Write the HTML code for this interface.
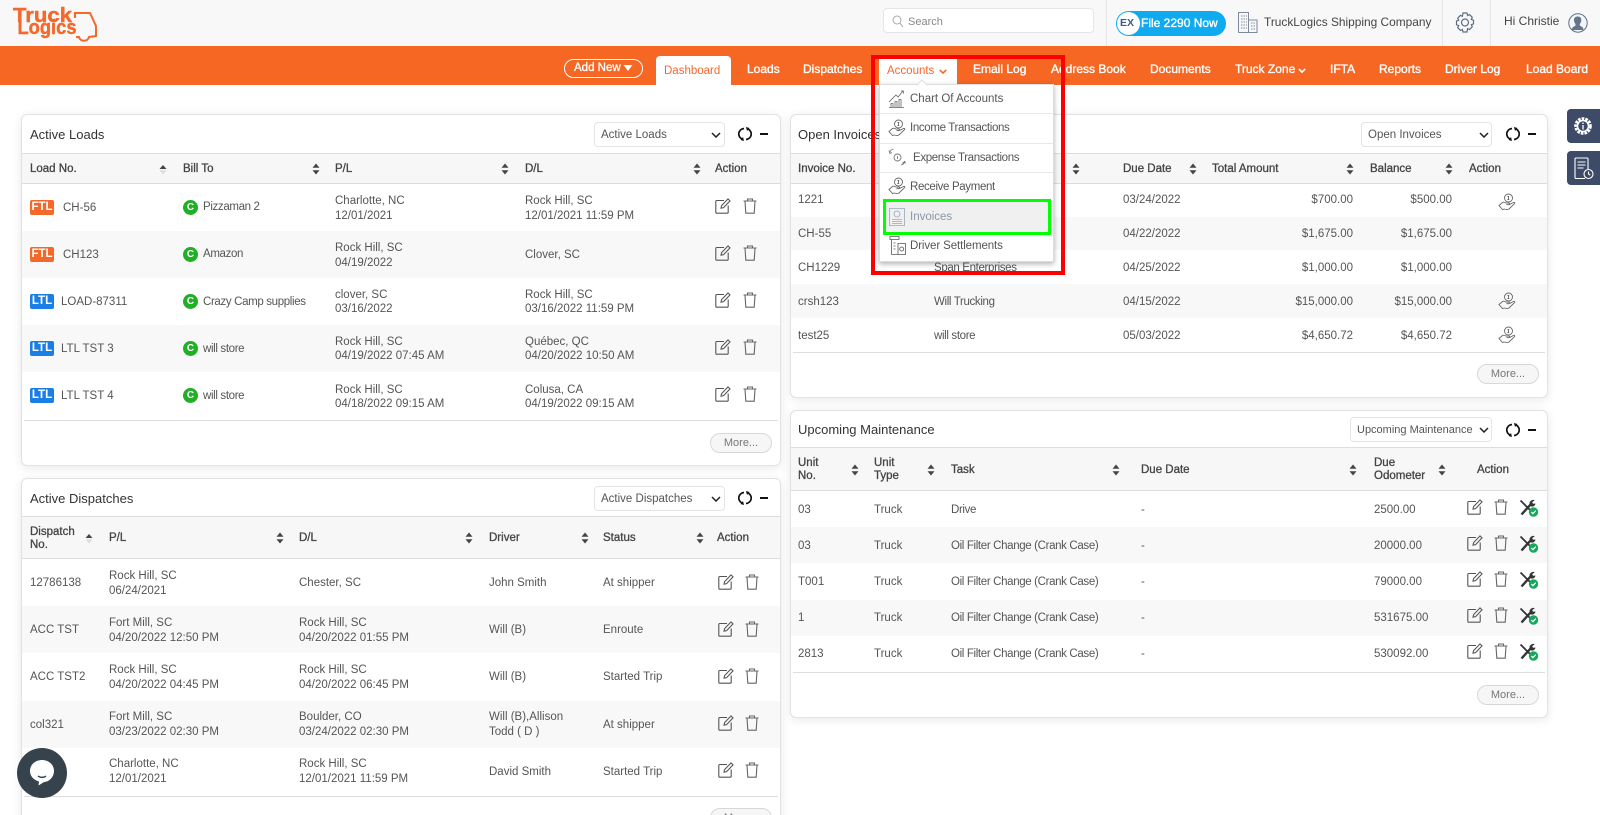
<!DOCTYPE html>
<html><head><meta charset="utf-8"><title>TruckLogics</title>
<style>
html,body{margin:0;padding:0;width:1600px;height:815px;overflow:hidden;background:#fff;font-family:"Liberation Sans",sans-serif}
#p{position:relative;width:1600px;height:815px;overflow:hidden}
#p div,#p svg{position:absolute}
.t{white-space:nowrap;height:14px;line-height:14px;font-size:11.5px;color:#555;margin-top:1px}
.a{letter-spacing:-.35px}
.h{white-space:nowrap;height:14px;line-height:14px;font-size:11.5px;color:#444;-webkit-text-stroke:.3px #444}
.n{white-space:nowrap;height:14px;line-height:14px;font-size:12px;color:#fff;top:62px;-webkit-text-stroke:.35px #fff}
.r{text-align:right}
.card{background:#fff;border:1px solid #e2e2e2;border-radius:6px;box-shadow:0 2px 10px rgba(0,0,0,.09);box-sizing:border-box}
.hd{background:#f7f7f7;border-top:1px solid #ddd;border-bottom:1px solid #ddd;box-sizing:border-box}
.alt{background:#f8f8f8}
.ln{background:#ddd;height:1px}
.ttl{white-space:nowrap;height:16px;line-height:16px;font-size:13px;color:#333}
.sel{background:#fff;border:1px solid #e4e4e4;border-radius:4px;box-sizing:border-box;height:25px;font-size:11.5px;line-height:25px;color:#555;padding-left:6px;white-space:nowrap}
.more{background:#f6f6f6;border:1px solid #d8d8d8;border-radius:10px;box-sizing:border-box;height:20px;width:62px;font-size:11px;line-height:18px;color:#777;text-align:center}
.b{width:24px;height:15px;border-radius:2px;color:#fff;font-size:11.5px;font-weight:bold;line-height:15px;text-align:center}
.ftl{background:#f4682a}.ltl{background:#1b7ee6}
.c{width:15px;height:15px;border-radius:50%;background:#1fb025;color:#fff;font-size:10px;font-weight:bold;line-height:15px;text-align:center}
.m{white-space:nowrap;height:14px;line-height:14px;font-size:11.5px;color:#555;margin-top:1px}
.sep{background:#e8e8e8;height:1px;left:880px;width:173px}
</style></head><body><div id="p">
<svg width="0" height="0" style="left:0;top:0">
<defs>
<symbol id="e" viewBox="0 0 16 16"><g fill="none" stroke="#555" stroke-width="1.1"><path d="M9 2.5H1.8a1 1 0 0 0-1 1v10.7a1 1 0 0 0 1 1h10.4a1 1 0 0 0 1-1V7.5"/><path d="M6 10.2l.6-2.6L13 .9l2 2-6.400 6.700z"/></g></symbol>
<symbol id="d" viewBox="0 0 16 16"><g fill="none" stroke="#666" stroke-width="1.1"><path d="M1.500 3h13M5.500 3V1h5v2M3 3l.8 12.200h8.400L13 3"/></g></symbol>
<symbol id="s" viewBox="0 0 8 12"><path d="M4 .5L7.500 4.800H.5zM4 11.500L.5 7.200h7z" fill="#444"/></symbol>
<symbol id="u" viewBox="0 0 8 12"><path d="M4 2L7.500 6H.5z" fill="#444"/><path d="M4 11.500L.5 7.200h7z" fill="#ddd"/></symbol>
<symbol id="rf" viewBox="0 0 14 14"><g fill="none" stroke="#111" stroke-width="1.700"><path d="M6 1.500A5.500 5.500 0 0 0 4 12"/><path d="M8 12.500A5.500 5.500 0 0 0 10 2"/></g><path d="M5 10l1 4-3.500-1zM9 4L8 0l3.500 1z" fill="#111"/></symbol>
<symbol id="v" viewBox="0 0 10 6"><path d="M1 1l4 4 4-4" fill="none" stroke="#222" stroke-width="1.500"/></symbol>
<symbol id="hc" viewBox="0 0 18 18"><g fill="none" stroke="#666" stroke-width=".9"><circle cx="10.500" cy="5" r="4"/><path d="M10.500 3v4M9.500 6.500h1.700M9.500 3.600h1.700"/><path d="M1 12.500l3.500-3c1.500-.8 2.500 0 3.500.6h3c1 0 1 1.500 0 1.600H8.500l3.200-.3 4-2c1-.3 1.500.6.800 1.300L11 16c-1.500.8-3 .5-4.500 0L4.500 16.500z"/></g></symbol>
<symbol id="tl" viewBox="0 0 20 18"><g fill="none" stroke="#333"><path d="M1.500 1.500L12 12" stroke-width="1.800"/><path d="M2.500 15.500L12 5" stroke-width="2.400"/></g><path d="M10.500 4c.4-2.200 3-3.700 5.300-2.900l-2.600 2 .8 1.700 2.400-.3c0 2.200-2.700 3.800-4.800 2.800z" fill="#333"/><circle cx="14.500" cy="13" r="4.700" fill="#14a85a"/><path d="M12.300 13l1.600 1.700 2.800-3" fill="none" stroke="#fff" stroke-width="1.200"/></symbol>
</defs></svg>

<!-- top bar -->
<div style="left:0;top:0;width:1600px;height:46px;background:#f8f8f8"></div>
<svg style="left:10px;top:4px" width="90" height="40" viewBox="0 0 90 40">
<text x="3" y="18" font-family="Liberation Sans" font-weight="bold" font-size="20" fill="#f4682a" stroke="#f4682a" stroke-width=".4" textLength="59" lengthAdjust="spacingAndGlyphs">Truck</text>
<text x="7.500" y="30" font-family="Liberation Sans" font-weight="bold" font-size="20" fill="#f4682a" stroke="#f4682a" stroke-width=".4" textLength="59" lengthAdjust="spacingAndGlyphs">Logics</text>
<path d="M65 14V9h15l6 13v10l-7 1c-1 5-9 5-10 0h-3" fill="none" stroke="#f4682a" stroke-width="2"/>
</svg>
<div style="left:883px;top:8px;width:211px;height:25px;background:#fff;border:1px solid #e6e6e6;border-radius:4px;box-sizing:border-box"></div>
<svg style="left:892px;top:15px" width="12" height="13" viewBox="0 0 12 13"><circle cx="5" cy="5" r="4" fill="none" stroke="#aaa"/><path d="M8 8l3 4" stroke="#aaa"/></svg>
<div class="t" style="left:908px;top:14px;color:#888;font-size:11px">Search</div>
<div style="left:1106px;top:0;width:1px;height:46px;background:#e6e6e6"></div>
<div style="left:1442px;top:0;width:1px;height:46px;background:#e6e6e6"></div>
<div style="left:1490px;top:0;width:1px;height:46px;background:#e6e6e6"></div>
<div style="left:1116px;top:11px;width:110px;height:25px;border-radius:13px;background:#10aaf0"></div>
<div style="left:1117px;top:12px;width:23px;height:23px;border-radius:50%;background:#fff"></div>
<div style="left:1120px;top:17px;font-size:10.500px;font-weight:bold;line-height:13px;color:#3a5a8c">EX</div>
<div style="left:1141px;top:16px;white-space:nowrap;font-size:12px;line-height:14px;color:#fff;-webkit-text-stroke:.35px #fff">File 2290 Now</div>
<svg style="left:1238px;top:12px" width="20" height="21" viewBox="0 0 20 21"><g fill="none" stroke="#7d8a9c"><path d="M.5 20.500V.5h10v20M10.500 8h8.500v12.500H.5"/><path d="M3 4h6M3 7h6M3 10h6M3 13h6M3 16h6M13 11h4M13 14h4M13 17h4" stroke-dasharray="1.500 1"/></g></svg>
<div class="t" style="left:1264px;top:14px;font-size:11.900px;color:#444">TruckLogics Shipping Company</div>
<svg style="left:1455px;top:12px" width="20" height="21" viewBox="0 0 20 21"><g fill="none" stroke="#5e6e86" stroke-width="1.200"><path d="M8 1h4l.6 2.500 2-.9 2.700 2.800-1 2 2.200.8v3.700l-2.200.8 1 2-2.700 2.800-2-.9L12 20H8l-.6-2.500-2 .9-2.700-2.800 1-2-2.200-.8V9l2.200-.8-1-2 2.700-2.800 2 .9z"/><circle cx="10" cy="10.500" r="3.500"/></g></svg>
<div class="t" style="left:1504px;top:13px;font-size:12px;color:#444">Hi Christie</div>
<svg style="left:1568px;top:13px" width="20" height="20" viewBox="0 0 20 20"><circle cx="10" cy="10" r="9.200" fill="#f4f6f8" stroke="#5e6e86"/><path d="M10 3.500c2.500 0 3.500 2 3.300 4-.1 1.500-1 3-1.500 3.500v1.500l3 2c.5.500.5 1.500.5 2.500H4c0-1 0-2 .5-2.500l3-2V11c-.5-.5-1.400-2-1.500-3.500-.2-2 .8-4 3.500-4z" fill="#64748c"/></svg>

<!-- nav -->
<div style="left:0;top:46px;width:1600px;height:39px;background:#f56723"></div>
<div style="left:564px;top:59px;width:79px;height:19px;border:1px solid #fff;border-radius:10px;box-sizing:border-box"></div>
<div class="n" style="left:574px;top:61px;font-size:11.500px">Add New</div>
<svg style="left:623px;top:65px" width="10" height="6" viewBox="0 0 10 6"><path d="M.5 0h9L5 6z" fill="#fff"/></svg>
<div style="left:656px;top:56px;width:75px;height:29px;background:#fff;border-radius:4px 4px 0 0"></div>
<div class="t" style="left:664px;top:63px;color:#f4682a">Dashboard</div>
<div class="n" style="left:747px">Loads</div>
<div class="n" style="left:803px">Dispatches</div>
<div style="left:879px;top:58px;width:78px;height:27px;background:#fff"></div>
<div class="t" style="left:887px;top:63px;color:#f4682a">Accounts</div>
<svg style="left:939px;top:69px" width="8" height="5" viewBox="0 0 10 6"><path d="M1 1l4 4 4-4" fill="none" stroke="#f4682a" stroke-width="2"/></svg>
<div class="n" style="left:973px">Email Log</div>
<div class="n" style="left:1051px">Address Book</div>
<div class="n" style="left:1150px">Documents</div>
<div class="n" style="left:1235px">Truck Zone</div>
<svg style="left:1298px;top:68px" width="8" height="5" viewBox="0 0 10 6"><path d="M1 1l4 4 4-4" fill="none" stroke="#fff" stroke-width="2"/></svg>
<div class="n" style="left:1330px">IFTA</div>
<div class="n" style="left:1379px">Reports</div>
<div class="n" style="left:1445px">Driver Log</div>
<div class="n" style="left:1526px">Load Board</div>

<!-- Active Loads -->
<div class="card" style="left:21px;top:114px;width:760px;height:352px"></div>
<div class="ttl" style="left:30px;top:127px">Active Loads</div>
<div class="sel" style="left:594px;top:122px;width:131px">Active Loads</div>
<svg style="left:711px;top:132px" width="10" height="6"><use href="#v"/></svg>
<svg style="left:738px;top:127px" width="14" height="14"><use href="#rf"/></svg>
<div style="left:760px;top:133px;width:8px;height:2px;background:#111"></div>
<div class="hd" style="left:22px;top:153px;width:758px;height:31px"></div>
<div class="h" style="left:30px;top:162px">Load No.</div><svg style="left:159px;top:163px" width="8" height="12"><use href="#u"/></svg>
<div class="h" style="left:183px;top:162px">Bill To</div><svg style="left:312px;top:163px" width="8" height="12"><use href="#s"/></svg>
<div class="h" style="left:335px;top:162px">P/L</div><svg style="left:501px;top:163px" width="8" height="12"><use href="#s"/></svg>
<div class="h" style="left:525px;top:162px">D/L</div><svg style="left:693px;top:163px" width="8" height="12"><use href="#s"/></svg>
<div class="h" style="left:715px;top:162px">Action</div>
<div class="alt" style="left:22px;top:231px;width:758px;height:47px"></div>
<div class="alt" style="left:22px;top:325px;width:758px;height:47px"></div>
<div class="ln" style="left:24px;top:420px;width:754px"></div>

<div class="b ftl" style="left:30px;top:200px">FTL</div><div class="t" style="left:63px;top:200px">CH-56</div>
<div class="c" style="left:183px;top:200px">C</div><div class="t a" style="left:203px;top:199px">Pizzaman 2</div>
<div class="t" style="left:335px;top:193px">Charlotte, NC</div><div class="t" style="left:335px;top:208px">12/01/2021</div>
<div class="t" style="left:525px;top:193px">Rock Hill, SC</div><div class="t" style="left:525px;top:208px">12/01/2021 11:59 PM</div>
<svg style="left:715px;top:198px" width="16" height="16"><use href="#e"/></svg><svg style="left:742px;top:198px" width="16" height="16"><use href="#d"/></svg>

<div class="b ftl" style="left:30px;top:247px">FTL</div><div class="t" style="left:63px;top:247px">CH123</div>
<div class="c" style="left:183px;top:247px">C</div><div class="t a" style="left:203px;top:246px">Amazon</div>
<div class="t" style="left:335px;top:240px">Rock Hill, SC</div><div class="t" style="left:335px;top:255px">04/19/2022</div>
<div class="t" style="left:525px;top:247px">Clover, SC</div>
<svg style="left:715px;top:245px" width="16" height="16"><use href="#e"/></svg><svg style="left:742px;top:245px" width="16" height="16"><use href="#d"/></svg>

<div class="b ltl" style="left:30px;top:294px">LTL</div><div class="t" style="left:61px;top:294px">LOAD-87311</div>
<div class="c" style="left:183px;top:294px">C</div><div class="t a" style="left:203px;top:294px">Crazy Camp supplies</div>
<div class="t" style="left:335px;top:287px">clover, SC</div><div class="t" style="left:335px;top:301px">03/16/2022</div>
<div class="t" style="left:525px;top:287px">Rock Hill, SC</div><div class="t" style="left:525px;top:301px">03/16/2022 11:59 PM</div>
<svg style="left:715px;top:292px" width="16" height="16"><use href="#e"/></svg><svg style="left:742px;top:292px" width="16" height="16"><use href="#d"/></svg>

<div class="b ltl" style="left:30px;top:341px">LTL</div><div class="t" style="left:61px;top:341px">LTL TST 3</div>
<div class="c" style="left:183px;top:341px">C</div><div class="t a" style="left:203px;top:341px">will store</div>
<div class="t" style="left:335px;top:334px">Rock Hill, SC</div><div class="t" style="left:335px;top:348px">04/19/2022 07:45 AM</div>
<div class="t" style="left:525px;top:334px">Québec, QC</div><div class="t" style="left:525px;top:348px">04/20/2022 10:50 AM</div>
<svg style="left:715px;top:339px" width="16" height="16"><use href="#e"/></svg><svg style="left:742px;top:339px" width="16" height="16"><use href="#d"/></svg>

<div class="b ltl" style="left:30px;top:388px">LTL</div><div class="t" style="left:61px;top:388px">LTL TST 4</div>
<div class="c" style="left:183px;top:388px">C</div><div class="t a" style="left:203px;top:388px">will store</div>
<div class="t" style="left:335px;top:382px">Rock Hill, SC</div><div class="t" style="left:335px;top:396px">04/18/2022 09:15 AM</div>
<div class="t" style="left:525px;top:382px">Colusa, CA</div><div class="t" style="left:525px;top:396px">04/19/2022 09:15 AM</div>
<svg style="left:715px;top:386px" width="16" height="16"><use href="#e"/></svg><svg style="left:742px;top:386px" width="16" height="16"><use href="#d"/></svg>
<div class="more" style="left:710px;top:433px">More...</div>

<!-- Active Dispatches -->
<div class="card" style="left:21px;top:478px;width:760px;height:350px"></div>
<div class="ttl" style="left:30px;top:491px">Active Dispatches</div>
<div class="sel" style="left:594px;top:486px;width:131px">Active Dispatches</div>
<svg style="left:711px;top:496px" width="10" height="6"><use href="#v"/></svg>
<svg style="left:738px;top:491px" width="14" height="14"><use href="#rf"/></svg>
<div style="left:760px;top:497px;width:8px;height:2px;background:#111"></div>
<div class="hd" style="left:22px;top:516px;width:758px;height:43px"></div>
<div class="h" style="left:30px;top:525px">Dispatch</div><div class="h" style="left:30px;top:538px">No.</div><svg style="left:85px;top:532px" width="8" height="12"><use href="#u"/></svg>
<div class="h" style="left:109px;top:531px">P/L</div><svg style="left:276px;top:532px" width="8" height="12"><use href="#s"/></svg>
<div class="h" style="left:299px;top:531px">D/L</div><svg style="left:465px;top:532px" width="8" height="12"><use href="#s"/></svg>
<div class="h" style="left:489px;top:531px">Driver</div><svg style="left:581px;top:532px" width="8" height="12"><use href="#s"/></svg>
<div class="h" style="left:603px;top:531px">Status</div><svg style="left:696px;top:532px" width="8" height="12"><use href="#s"/></svg>
<div class="h" style="left:717px;top:531px">Action</div>
<div class="alt" style="left:22px;top:606px;width:758px;height:47px"></div>
<div class="alt" style="left:22px;top:701px;width:758px;height:47px"></div>
<div class="ln" style="left:24px;top:796px;width:754px"></div>

<div class="t" style="left:30px;top:575px">12786138</div>
<div class="t" style="left:109px;top:568px">Rock Hill, SC</div><div class="t" style="left:109px;top:583px">06/24/2021</div>
<div class="t" style="left:299px;top:575px">Chester, SC</div>
<div class="t" style="left:489px;top:575px">John Smith</div><div class="t" style="left:603px;top:575px">At shipper</div>
<svg style="left:718px;top:574px" width="16" height="16"><use href="#e"/></svg><svg style="left:744px;top:574px" width="16" height="16"><use href="#d"/></svg>

<div class="t" style="left:30px;top:622px">ACC TST</div>
<div class="t" style="left:109px;top:615px">Fort Mill, SC</div><div class="t" style="left:109px;top:630px">04/20/2022 12:50 PM</div>
<div class="t" style="left:299px;top:615px">Rock Hill, SC</div><div class="t" style="left:299px;top:630px">04/20/2022 01:55 PM</div>
<div class="t" style="left:489px;top:622px">Will (B)</div><div class="t" style="left:603px;top:622px">Enroute</div>
<svg style="left:718px;top:621px" width="16" height="16"><use href="#e"/></svg><svg style="left:744px;top:621px" width="16" height="16"><use href="#d"/></svg>

<div class="t" style="left:30px;top:669px">ACC TST2</div>
<div class="t" style="left:109px;top:662px">Rock Hill, SC</div><div class="t" style="left:109px;top:677px">04/20/2022 04:45 PM</div>
<div class="t" style="left:299px;top:662px">Rock Hill, SC</div><div class="t" style="left:299px;top:677px">04/20/2022 06:45 PM</div>
<div class="t" style="left:489px;top:669px">Will (B)</div><div class="t" style="left:603px;top:669px">Started Trip</div>
<svg style="left:718px;top:668px" width="16" height="16"><use href="#e"/></svg><svg style="left:744px;top:668px" width="16" height="16"><use href="#d"/></svg>

<div class="t" style="left:30px;top:717px">col321</div>
<div class="t" style="left:109px;top:709px">Fort Mill, SC</div><div class="t" style="left:109px;top:724px">03/23/2022 02:30 PM</div>
<div class="t" style="left:299px;top:709px">Boulder, CO</div><div class="t" style="left:299px;top:724px">03/24/2022 02:30 PM</div>
<div class="t" style="left:489px;top:709px">Will (B),Allison</div><div class="t" style="left:489px;top:724px">Todd ( D )</div><div class="t" style="left:603px;top:717px">At shipper</div>
<svg style="left:718px;top:715px" width="16" height="16"><use href="#e"/></svg><svg style="left:744px;top:715px" width="16" height="16"><use href="#d"/></svg>

<div class="t" style="left:109px;top:756px">Charlotte, NC</div><div class="t" style="left:109px;top:771px">12/01/2021</div>
<div class="t" style="left:299px;top:756px">Rock Hill, SC</div><div class="t" style="left:299px;top:771px">12/01/2021 11:59 PM</div>
<div class="t" style="left:489px;top:764px">David Smith</div><div class="t" style="left:603px;top:764px">Started Trip</div>
<svg style="left:718px;top:762px" width="16" height="16"><use href="#e"/></svg><svg style="left:744px;top:762px" width="16" height="16"><use href="#d"/></svg>
<div class="more" style="left:710px;top:808px">More...</div>

<!-- Open Invoices -->
<div class="card" style="left:790px;top:114px;width:758px;height:284px"></div>
<div class="ttl" style="left:798px;top:127px">Open Invoices</div>
<div class="sel" style="left:1361px;top:122px;width:131px">Open Invoices</div>
<svg style="left:1479px;top:132px" width="10" height="6"><use href="#v"/></svg>
<svg style="left:1506px;top:127px" width="14" height="14"><use href="#rf"/></svg>
<div style="left:1528px;top:133px;width:8px;height:2px;background:#111"></div>
<div class="hd" style="left:791px;top:153px;width:756px;height:31px"></div>
<div class="h" style="left:798px;top:162px">Invoice No.</div>
<div class="h" style="left:934px;top:162px">Bill To</div>
<svg style="left:1072px;top:163px" width="8" height="12"><use href="#s"/></svg>
<div class="h" style="left:1123px;top:162px">Due Date</div><svg style="left:1189px;top:163px" width="8" height="12"><use href="#s"/></svg>
<div class="h" style="left:1212px;top:162px">Total Amount</div><svg style="left:1346px;top:163px" width="8" height="12"><use href="#s"/></svg>
<div class="h" style="left:1370px;top:162px">Balance</div><svg style="left:1445px;top:163px" width="8" height="12"><use href="#s"/></svg>
<div class="h" style="left:1469px;top:162px">Action</div>
<div class="alt" style="left:791px;top:217px;width:756px;height:33px"></div>
<div class="alt" style="left:791px;top:284px;width:756px;height:34px"></div>
<div class="ln" style="left:793px;top:352px;width:752px"></div>

<div class="t" style="left:798px;top:192px">1221</div><div class="t" style="left:1123px;top:192px">03/24/2022</div>
<div class="t r" style="left:1253px;width:100px;top:192px">$700.00</div><div class="t r" style="left:1352px;width:100px;top:192px">$500.00</div>
<svg style="left:1498px;top:193px" width="18" height="18"><use href="#hc"/></svg>

<div class="t" style="left:798px;top:226px">CH-55</div><div class="t" style="left:1123px;top:226px">04/22/2022</div>
<div class="t r" style="left:1253px;width:100px;top:226px">$1,675.00</div><div class="t r" style="left:1352px;width:100px;top:226px">$1,675.00</div>

<div class="t" style="left:798px;top:260px">CH1229</div><div class="t a" style="left:934px;top:260px">Span Enterprises</div><div class="t" style="left:1123px;top:260px">04/25/2022</div>
<div class="t r" style="left:1253px;width:100px;top:260px">$1,000.00</div><div class="t r" style="left:1352px;width:100px;top:260px">$1,000.00</div>

<div class="t" style="left:798px;top:294px">crsh123</div><div class="t a" style="left:934px;top:294px">Will Trucking</div><div class="t" style="left:1123px;top:294px">04/15/2022</div>
<div class="t r" style="left:1253px;width:100px;top:294px">$15,000.00</div><div class="t r" style="left:1352px;width:100px;top:294px">$15,000.00</div>
<svg style="left:1498px;top:292px" width="18" height="18"><use href="#hc"/></svg>

<div class="t" style="left:798px;top:328px">test25</div><div class="t a" style="left:934px;top:328px">will store</div><div class="t" style="left:1123px;top:328px">05/03/2022</div>
<div class="t r" style="left:1253px;width:100px;top:328px">$4,650.72</div><div class="t r" style="left:1352px;width:100px;top:328px">$4,650.72</div>
<svg style="left:1498px;top:326px" width="18" height="18"><use href="#hc"/></svg>
<div class="more" style="left:1477px;top:364px">More...</div>

<!-- Upcoming Maintenance -->
<div class="card" style="left:790px;top:410px;width:758px;height:308px"></div>
<div class="ttl" style="left:798px;top:422px">Upcoming Maintenance</div>
<div class="sel" style="left:1350px;top:417px;width:142px;font-size:11px">Upcoming Maintenance</div>
<svg style="left:1479px;top:427px" width="10" height="6"><use href="#v"/></svg>
<svg style="left:1506px;top:423px" width="14" height="14"><use href="#rf"/></svg>
<div style="left:1528px;top:429px;width:8px;height:2px;background:#111"></div>
<div class="hd" style="left:791px;top:447px;width:756px;height:44px"></div>
<div class="h" style="left:798px;top:456px">Unit</div><div class="h" style="left:798px;top:469px">No.</div><svg style="left:851px;top:464px" width="8" height="12"><use href="#s"/></svg>
<div class="h" style="left:874px;top:456px">Unit</div><div class="h" style="left:874px;top:469px">Type</div><svg style="left:927px;top:464px" width="8" height="12"><use href="#s"/></svg>
<div class="h" style="left:951px;top:463px">Task</div><svg style="left:1112px;top:464px" width="8" height="12"><use href="#s"/></svg>
<div class="h" style="left:1141px;top:463px">Due Date</div><svg style="left:1349px;top:464px" width="8" height="12"><use href="#s"/></svg>
<div class="h" style="left:1374px;top:456px">Due</div><div class="h" style="left:1374px;top:469px">Odometer</div><svg style="left:1438px;top:464px" width="8" height="12"><use href="#s"/></svg>
<div class="h" style="left:1477px;top:463px">Action</div>
<div class="alt" style="left:791px;top:527px;width:756px;height:36px"></div>
<div class="alt" style="left:791px;top:600px;width:756px;height:36px"></div>
<div class="ln" style="left:793px;top:672px;width:752px"></div>

<div class="t" style="left:798px;top:502px">03</div><div class="t" style="left:874px;top:502px">Truck</div><div class="t a" style="left:951px;top:502px">Drive</div><div class="t" style="left:1141px;top:502px">-</div><div class="t" style="left:1374px;top:502px">2500.00</div>
<svg style="left:1467px;top:499px" width="16" height="16"><use href="#e"/></svg><svg style="left:1493px;top:499px" width="16" height="16"><use href="#d"/></svg><svg style="left:1519px;top:499px" width="20" height="18"><use href="#tl"/></svg>

<div class="t" style="left:798px;top:538px">03</div><div class="t" style="left:874px;top:538px">Truck</div><div class="t a" style="left:951px;top:538px">Oil Filter Change (Crank Case)</div><div class="t" style="left:1141px;top:538px">-</div><div class="t" style="left:1374px;top:538px">20000.00</div>
<svg style="left:1467px;top:535px" width="16" height="16"><use href="#e"/></svg><svg style="left:1493px;top:535px" width="16" height="16"><use href="#d"/></svg><svg style="left:1519px;top:535px" width="20" height="18"><use href="#tl"/></svg>

<div class="t" style="left:798px;top:574px">T001</div><div class="t" style="left:874px;top:574px">Truck</div><div class="t a" style="left:951px;top:574px">Oil Filter Change (Crank Case)</div><div class="t" style="left:1141px;top:574px">-</div><div class="t" style="left:1374px;top:574px">79000.00</div>
<svg style="left:1467px;top:571px" width="16" height="16"><use href="#e"/></svg><svg style="left:1493px;top:571px" width="16" height="16"><use href="#d"/></svg><svg style="left:1519px;top:571px" width="20" height="18"><use href="#tl"/></svg>

<div class="t" style="left:798px;top:610px">1</div><div class="t" style="left:874px;top:610px">Truck</div><div class="t a" style="left:951px;top:610px">Oil Filter Change (Crank Case)</div><div class="t" style="left:1141px;top:610px">-</div><div class="t" style="left:1374px;top:610px">531675.00</div>
<svg style="left:1467px;top:607px" width="16" height="16"><use href="#e"/></svg><svg style="left:1493px;top:607px" width="16" height="16"><use href="#d"/></svg><svg style="left:1519px;top:607px" width="20" height="18"><use href="#tl"/></svg>

<div class="t" style="left:798px;top:646px">2813</div><div class="t" style="left:874px;top:646px">Truck</div><div class="t a" style="left:951px;top:646px">Oil Filter Change (Crank Case)</div><div class="t" style="left:1141px;top:646px">-</div><div class="t" style="left:1374px;top:646px">530092.00</div>
<svg style="left:1467px;top:643px" width="16" height="16"><use href="#e"/></svg><svg style="left:1493px;top:643px" width="16" height="16"><use href="#d"/></svg><svg style="left:1519px;top:643px" width="20" height="18"><use href="#tl"/></svg>
<div class="more" style="left:1477px;top:685px">More...</div>

<!-- Dropdown -->
<div style="left:879px;top:84px;width:175px;height:178px;background:#fff;border:1px solid #ddd;box-sizing:border-box;box-shadow:0 2px 5px rgba(0,0,0,.3)"></div>
<div style="left:918px;top:81px;width:7px;height:7px;background:#fff;border-left:1px solid #ddd;border-top:1px solid #ddd;transform:rotate(45deg)"></div>
<div class="sep" style="top:113px"></div><div class="sep" style="top:143px"></div><div class="sep" style="top:172px"></div>
<div style="left:885px;top:201px;width:165px;height:33px;background:#f0f0f0"></div>
<svg style="left:888px;top:90px" width="18" height="18" viewBox="0 0 18 18"><g fill="none" stroke="#666" stroke-width=".8"><path d="M1 17.500h15M3 17.500v-4h2v4M7 17.500v-6h2v6M11 17.500v-8h2v8M1 12L8 5l2 2 5-6"/><path d="M13 1h2.500v2.500"/></g></svg>
<svg style="left:888px;top:119px" width="18" height="18"><use href="#hc"/></svg>
<svg style="left:888px;top:148px" width="18" height="18" viewBox="0 0 18 18"><g fill="none" stroke="#777" stroke-width=".9"><circle cx="9.500" cy="9.500" r="3.500"/><path d="M9.500 8v3M1.500 5c.5-2 2-3.500 4-4M17 13c-.5 2-2 3.500-4 4M1 2.500l1 3 2-1M14.500 15.500l2-2 1 2"/></g></svg>
<svg style="left:888px;top:177px" width="18" height="18"><use href="#hc"/></svg>
<svg style="left:889px;top:208px" width="16" height="18" viewBox="0 0 16 18"><g fill="none" stroke="#9aa6b8" stroke-width=".8"><path d="M.5.5h15v17H.5z"/><circle cx="8" cy="6" r="3"/><path d="M3 11.500h10M3 13.500h10M3 15.500h10"/></g></svg>
<svg style="left:888px;top:236px" width="18" height="19" viewBox="0 0 18 19"><g fill="none" stroke="#555" stroke-width=".8"><path d="M2 .5h9v3H2zM3.500 3.500v15M3.500 18.500h6M10 7.500h7.500v11H10z"/><circle cx="13.700" cy="13" r="2"/><path d="M5.500 7h2M5.500 10h2M5.500 13h2"/></g></svg>
<div class="m" style="left:910px;top:91px">Chart Of Accounts</div>
<div class="m a" style="left:910px;top:120px">Income Transactions</div>
<div class="m a" style="left:913px;top:150px">Expense Transactions</div>
<div class="m a" style="left:910px;top:179px">Receive Payment</div>
<div class="m" style="left:910px;top:209px;color:#8a96a8">Invoices</div>
<div class="m" style="left:910px;top:238px;letter-spacing:-.1px">Driver Settlements</div>

<!-- annotations -->
<div style="left:871px;top:55px;width:194px;height:220px;border:4px solid #f00;box-sizing:border-box"></div>
<div style="left:883px;top:199px;width:168px;height:36px;border:3px solid #0f0;box-sizing:border-box"></div>

<!-- side buttons -->
<div style="left:1567px;top:109px;width:33px;height:34px;background:#3d4a68;border-radius:4px 0 0 4px"></div>
<svg style="left:1574px;top:117px" width="18" height="18" viewBox="0 0 18 18"><circle cx="9" cy="9" r="7" fill="none" stroke="#fff" stroke-width="3.600" stroke-dasharray="2.500 1"/><circle cx="9" cy="9" r="5.500" fill="none" stroke="#fff" stroke-width="1.500"/><path d="M9 5.500v1.500M9 8v4.500" stroke="#fff" stroke-width="1.300"/></svg>
<div style="left:1567px;top:151px;width:33px;height:34px;background:#3d4a68;border-radius:4px 0 0 4px"></div>
<svg style="left:1574px;top:157px" width="20" height="23" viewBox="0 0 20 23"><g fill="none" stroke="#fff" stroke-width="1.100"><path d="M11 21.500H2a1 1 0 0 1-1-1V2a1 1 0 0 1 1-1h11a1 1 0 0 1 1 1v10"/><path d="M3.500 5h8M3.500 8h8M3.500 11h6"/><circle cx="14.500" cy="17" r="4.500"/><path d="M14.500 14.500V17l1.800 1.200"/></g></svg>

<!-- chat -->
<div style="left:17px;top:748px;width:50px;height:50px;border-radius:50%;background:#36424c"></div>
<svg style="left:29px;top:759px" width="26" height="27" viewBox="0 0 26 27"><path d="M13 1c6.500 0 12 4.500 12 11s-5.500 11-10 11l-5.500 3.500.5-4C5 21 1 17.500 1 12 1 5.500 6.500 1 13 1z" fill="#fff"/><path d="M9 17c2 1.800 6 1.800 8 0" fill="none" stroke="#36424c" stroke-width="1.500"/></svg>
</div></body></html>
